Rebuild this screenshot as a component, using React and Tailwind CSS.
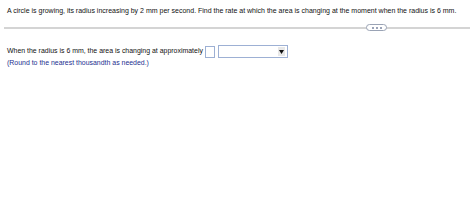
export default function App() {
  return (
    <div className="w-[474px] h-[215px] bg-white overflow-hidden" style={{ fontFamily: '"Liberation Sans", Arial, sans-serif' }}>
      <div className="pl-[7px] pt-[6px] text-[7px] leading-[9px] text-[#111] whitespace-nowrap">
        A circle is growing, its radius increasing by 2 mm per second. Find the rate at which the area is changing at the moment when the radius is 6 mm.
      </div>
      <div className="relative mx-[4px] mt-[12px] h-[2px] bg-[#d4d4d4]">
        <div className="absolute left-[362px] top-[-3px] w-[21px] h-[7px] rounded-full border border-[#9aa3b5] bg-white flex items-center justify-center gap-[2px]">
          <span className="w-[2px] h-[2px] rounded-full bg-[#7b86a0]" />
          <span className="w-[2px] h-[2px] rounded-full bg-[#7b86a0]" />
          <span className="w-[2px] h-[2px] rounded-full bg-[#7b86a0]" />
        </div>
      </div>
      <div className="pl-[7px] pt-[16px] flex items-center text-[6.95px] text-[#111] whitespace-nowrap">
        <span>When the radius is 6 mm, the area is changing at approximately</span>
        <span className="ml-[2px] w-[10px] h-[12px] border border-[#9db0d4] bg-white" />
        <span className="ml-[3px] w-[70px] h-[13px] border border-[#9db0d4] bg-white flex items-center justify-end pr-[2px]">
          <span className="w-[7px] h-[9px] bg-[#e8e8e8] flex items-center justify-center">
            <svg width="5" height="4" viewBox="0 0 5 4"><path d="M0 0H5L2.5 4Z" fill="#111" /></svg>
          </span>
        </span>
      </div>
      <div className="pl-[7px] pt-[0px] text-[6.95px] text-[#1c2f8f] whitespace-nowrap">
        (Round to the nearest thousandth as needed.)
      </div>
    </div>
  );
}
